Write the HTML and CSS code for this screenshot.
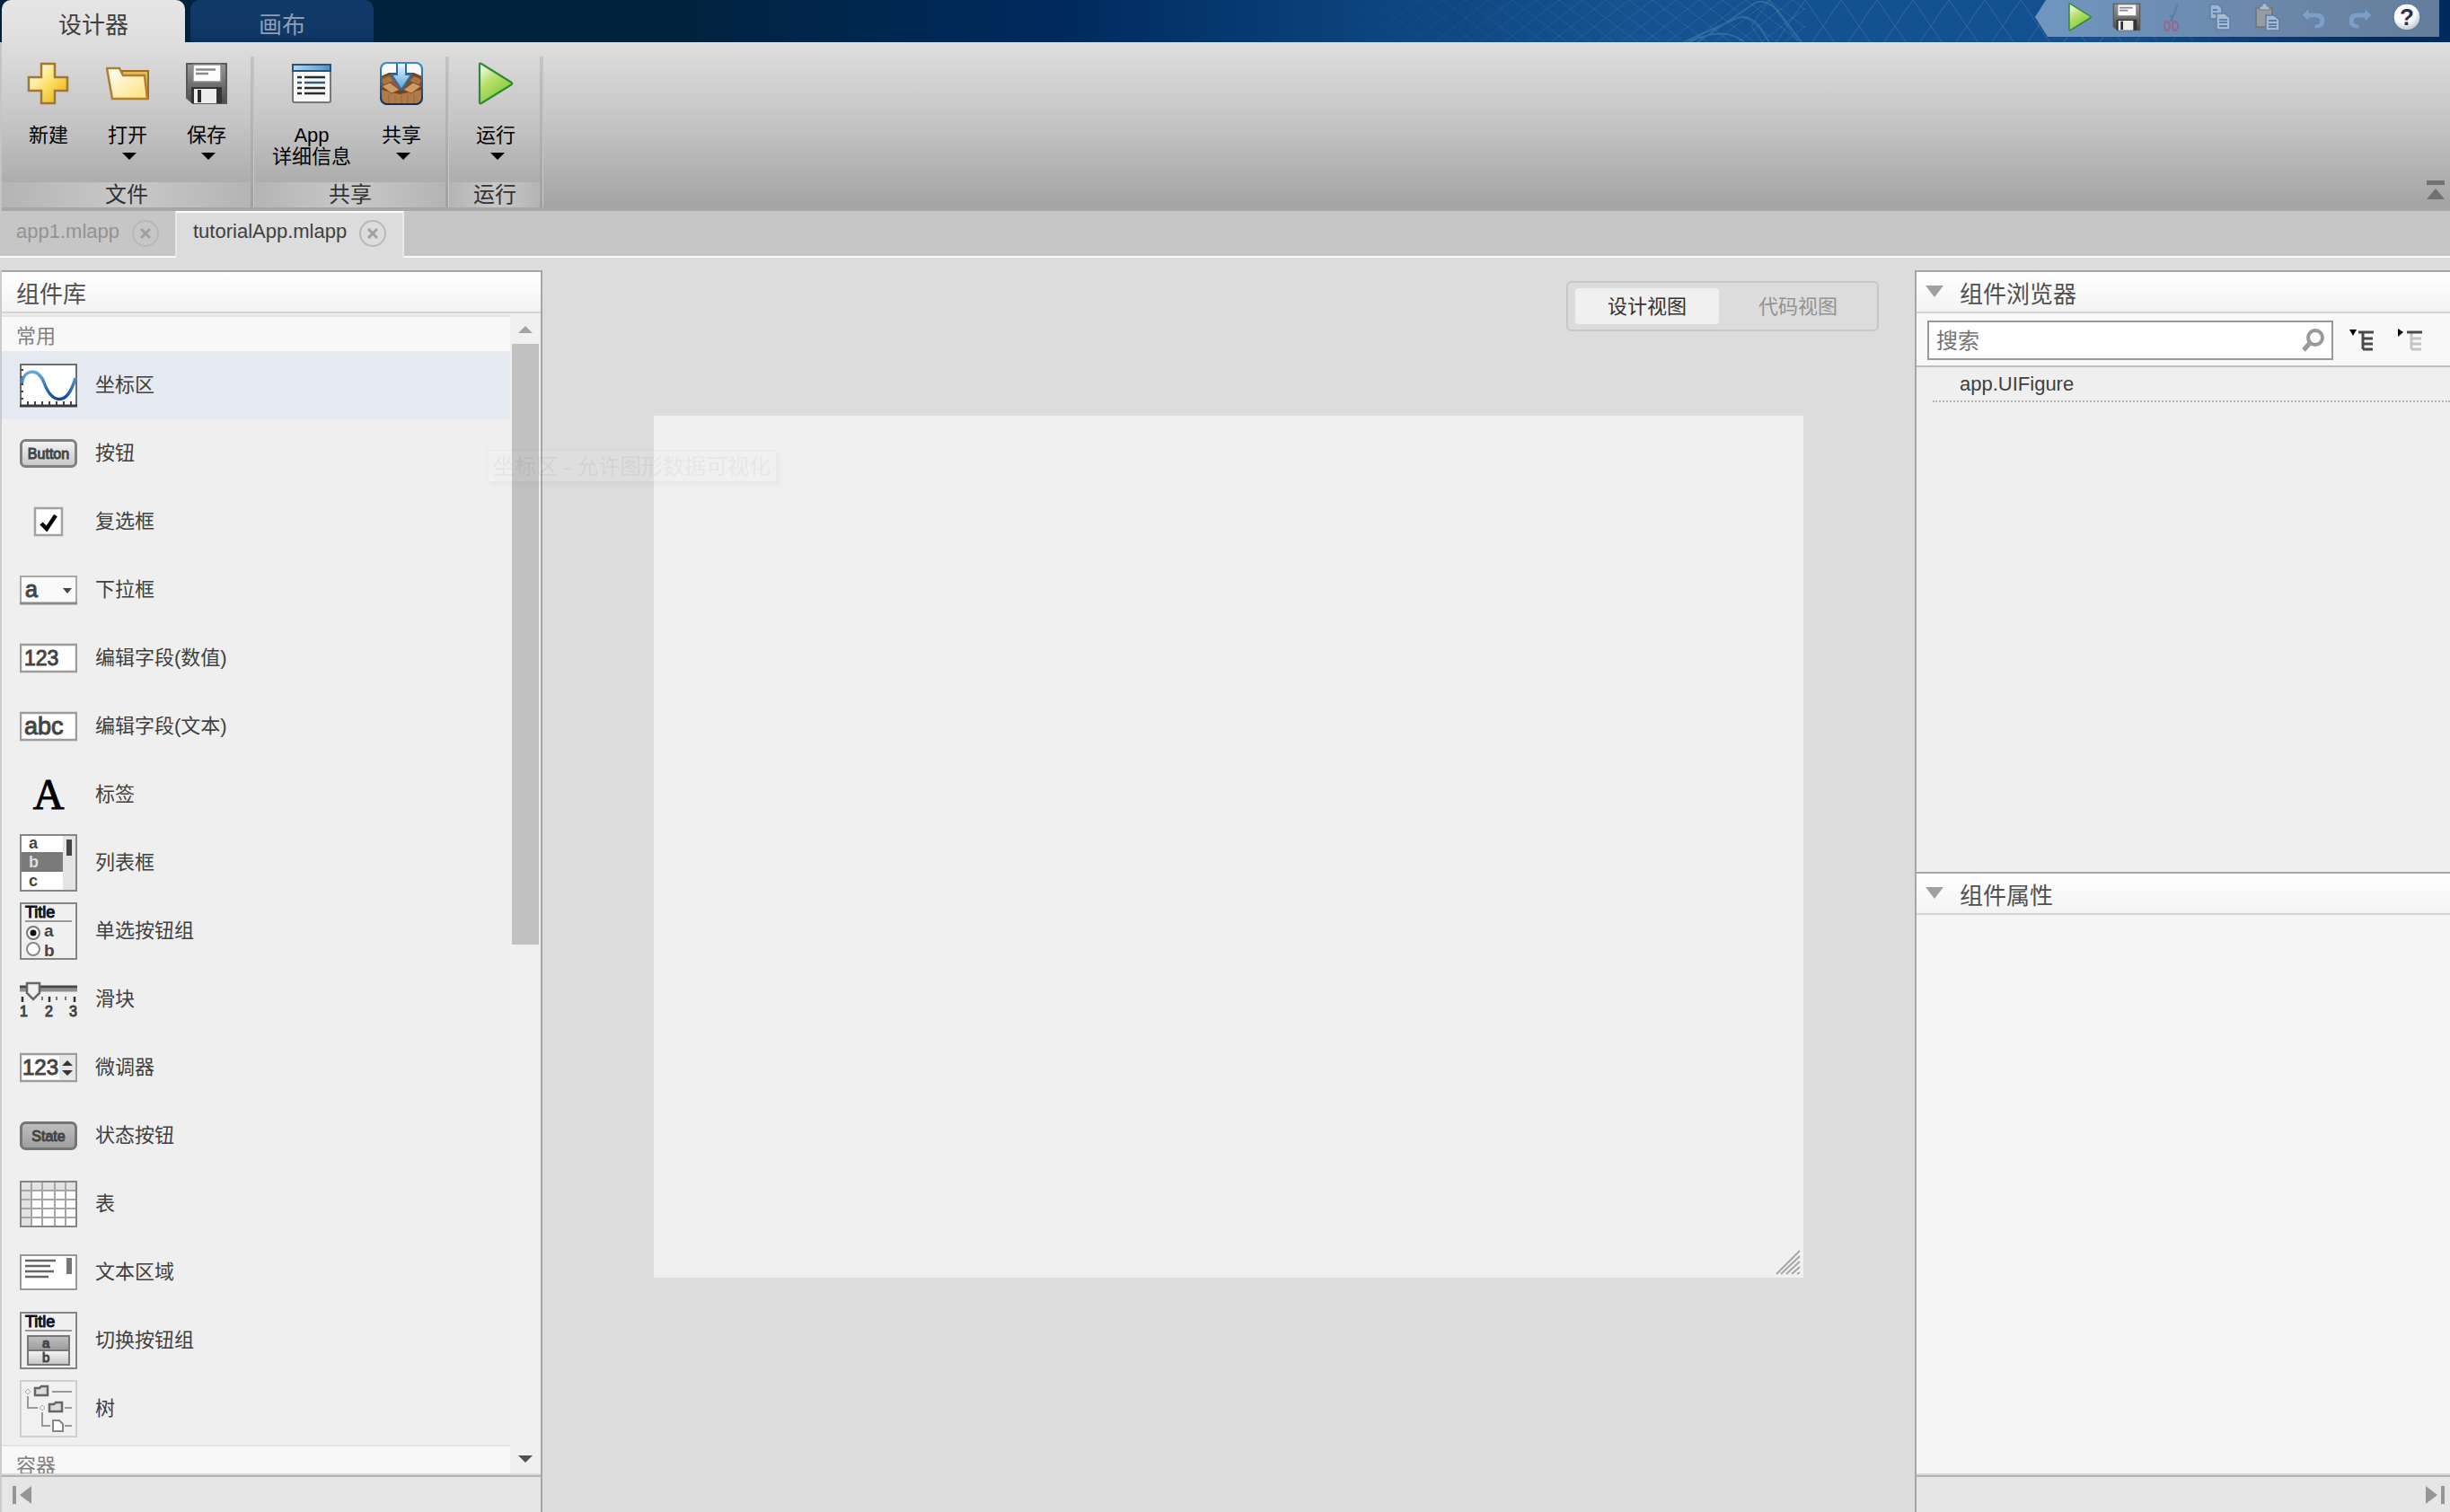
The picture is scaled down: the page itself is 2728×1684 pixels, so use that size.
FILE: index.html
```
<!DOCTYPE html>
<html lang="zh-CN">

<head>
    <meta charset="utf-8">
    <title>App 设计工具</title>
    <link rel="stylesheet" href="styles.css">
</head>

<body>

    <!-- shared gradients and icons -->
    <svg class="defs" width="0" height="0" aria-hidden="true">
        <defs>
            <linearGradient id="gold" x1="0" y1="0" x2="1" y2="1">
                <stop offset="0.1" stop-color="#fffdf0"/>
                <stop offset="0.5" stop-color="#fbe06a"/>
                <stop offset="1" stop-color="#e8a800"/>
            </linearGradient>
            <linearGradient id="paper" x1="0" y1="0" x2="1" y2="1">
                <stop offset="0" stop-color="#ffffff"/>
                <stop offset="1" stop-color="#fbe17a"/>
            </linearGradient>
            <linearGradient id="green" x1="0" y1="0" x2="0.6" y2="1">
                <stop offset="0" stop-color="#ffffff"/>
                <stop offset="0.45" stop-color="#b9e070"/>
                <stop offset="1" stop-color="#7cc62a"/>
            </linearGradient>
            <linearGradient id="metal" x1="0" y1="0" x2="0" y2="1">
                <stop offset="0" stop-color="#9a9a9a"/>
                <stop offset="1" stop-color="#4a4a4a"/>
            </linearGradient>
            <linearGradient id="btnFace" x1="0" y1="0" x2="0" y2="1">
                <stop offset="0" stop-color="#f6f6f6"/>
                <stop offset="1" stop-color="#c6c6c6"/>
            </linearGradient>
            <linearGradient id="darkFace" x1="0" y1="0" x2="0" y2="1">
                <stop offset="0" stop-color="#c0c0c0"/>
                <stop offset="1" stop-color="#9c9c9c"/>
            </linearGradient>
            <linearGradient id="blue" x1="0" y1="0" x2="0" y2="1">
                <stop offset="0" stop-color="#f4fbff"/>
                <stop offset="1" stop-color="#4f9fd6"/>
            </linearGradient>
            <linearGradient id="bar" x1="0" y1="0" x2="1" y2="0">
                <stop offset="0" stop-color="#b5daf2"/>
                <stop offset="1" stop-color="#4b94c9"/>
            </linearGradient>
            <linearGradient id="rim" x1="0" y1="0" x2="0" y2="1">
                <stop offset="0" stop-color="#3f8dc0"/>
                <stop offset="1" stop-color="#15325c"/>
            </linearGradient>
            <linearGradient id="wave" x1="0" y1="0" x2="0" y2="1">
                <stop offset="0" stop-color="#62abdc"/>
                <stop offset="1" stop-color="#12489a"/>
            </linearGradient>
            <radialGradient id="ball" cx="0.4" cy="0.3" r="0.8">
                <stop offset="0.5" stop-color="#ffffff"/>
                <stop offset="1" stop-color="#9fb3bd"/>
            </radialGradient>
            <linearGradient id="fade" x1="0" y1="0" x2="1" y2="0">
                <stop offset="0" stop-color="#fff" stop-opacity="0"/>
                <stop offset="0.4" stop-color="#fff"/>
                <stop offset="0.8" stop-color="#fff"/>
                <stop offset="1" stop-color="#fff" stop-opacity="0"/>
            </linearGradient>
            <mask id="fadeMask"><rect width="1100" height="47" fill="url(#fade)"/></mask>
            <pattern id="fine" width="26" height="20" patternUnits="userSpaceOnUse">
                <path d="M0 0L26 20M26 0L0 20" stroke="#4f80ad" stroke-opacity="0.4" fill="none"/>
            </pattern>
            <pattern id="wide" width="40" height="58" patternUnits="userSpaceOnUse">
                <path d="M0 0L40 58M40 0L0 58" stroke="#4f80ad" stroke-opacity="0.5" fill="none"/>
            </pattern>
        </defs>
        <symbol id="i-play" viewBox="0 0 48 48">
            <path d="M6 2.500Q6 .8 8 2L41 22.500Q43.500 24 41 25.500L8 46Q6 47 6 45z" fill="url(#green)" stroke="#2f8a34" stroke-width="2.200"/>
        </symbol>
        <symbol id="i-disk" viewBox="0 0 48 48">
            <path d="M2 2H46V46H9L2 40z" fill="url(#metal)" stroke="#5a5a5a" stroke-width="2"/>
            <path d="M9 3H40V22H9z" fill="#fdfdfd" stroke="#8c8c8c" stroke-width="1.500"/>
            <path d="M12 8.500H34M12 13H26" stroke="#8a8a8a" stroke-width="2.500"/>
            <path d="M7 46V28H41V46z" fill="#333"/>
            <path d="M10 46V30H35V46z" fill="#ededed"/>
            <path d="M14 31H18V45H14z" fill="#2a2a2a"/>
        </symbol>
    </svg>

    <header class="titlebar">
        <svg class="lattice" width="1100" height="47" aria-hidden="true">
            <g mask="url(#fadeMask)">
                <rect width="560" height="47" fill="url(#fine)"/>
                <rect x="500" width="600" height="47" fill="url(#wide)"/>
                <path d="M440 47L500 6Q512 -4 528 10L556 47M425 47L480 22Q494 14 508 28L520 47M430 47Q470 28 492 47" fill="none" stroke="#4f80ad" stroke-opacity="0.5" stroke-width="2"/>
            </g>
        </svg>
        <nav class="main-tabs">
            <button class="main-tab active">设计器</button>
            <button class="main-tab">画布</button>
        </nav>
        <div class="quick">
            <button aria-label="运行"><svg width="32" height="32"><use href="#i-play"/></svg></button>
            <button aria-label="保存"><svg width="32" height="32"><use href="#i-disk"/></svg></button>
            <button aria-label="剪切" class="dim">
                <svg width="32" height="32" viewBox="0 0 32 32"><path d="M13 14L15 21M21 2L13 21" stroke="#5d7590" stroke-width="2" fill="none"/><ellipse cx="9" cy="26" rx="3" ry="5" fill="none" stroke="#b0526b" stroke-width="2"/><ellipse cx="18" cy="26" rx="3" ry="5" fill="none" stroke="#b0526b" stroke-width="2"/></svg>
            </button>
            <button aria-label="复制" class="dim">
                <svg width="32" height="32" viewBox="0 0 32 32"><path d="M5 2H14L18 6V18H5z" fill="#b4c6dc" stroke="#577aa5" stroke-width="1.500"/><path d="M8 8H13M8 12H12" stroke="#577aa5" stroke-width="2"/><path d="M12 12H21L27 17V30H12z" fill="#c2d0e2" stroke="#577aa5" stroke-width="1.500"/><path d="M15 19H24M15 22H24M15 26H24" stroke="#577aa5" stroke-width="2"/></svg>
            </button>
            <button aria-label="粘贴" class="dim">
                <svg width="32" height="32" viewBox="0 0 32 32"><path d="M4 6H22V27H4z" fill="#aba598" stroke="#77746f" stroke-width="2"/><path d="M8 8V4H11V1H16V4H19V8z" fill="#c9d1d9" stroke="#69788c"/><path d="M15 14H24L30 19V31H15z" fill="#c2d0e2" stroke="#577aa5" stroke-width="1.500"/><path d="M18 20H27M18 24H27M18 27H27" stroke="#577aa5" stroke-width="2"/></svg>
            </button>
            <button aria-label="撤消" class="dim">
                <svg width="32" height="32" viewBox="0 0 32 32"><path d="M3 14L11 6V11H20Q29 11 29 20Q29 29 19 29H17V24H19Q23 24 23 20Q23 17 19 17H11V21z" fill="#86abd0" stroke="#5583b0"/></svg>
            </button>
            <button aria-label="重做" class="dim">
                <svg width="32" height="32" viewBox="0 0 32 32"><path d="M29 14L21 6V11H12Q3 11 3 20Q3 29 13 29H15V24H13Q9 24 9 20Q9 17 13 17H21V21z" fill="#86abd0" stroke="#5583b0"/></svg>
            </button>
            <button aria-label="帮助">
                <svg width="32" height="32" viewBox="0 0 32 32"><circle cx="16" cy="16" r="15" fill="url(#ball)" stroke="#4a7191"/><text x="16" y="25" class="qmark">?</text></svg>
            </button>
        </div>
    </header>

    <div class="ribbon">
        <section class="group">
            <div class="tools">
                <button class="tool">
                    <svg width="48" height="48" viewBox="0 0 48 48"><path d="M16 2H31V17H45V32H31V46H16V32H2V17H16z" fill="url(#gold)" stroke="#a4782a" stroke-width="2.500"/></svg>
                    <span>新建</span>
                </button>
                <button class="tool">
                    <svg width="48" height="48" viewBox="0 0 48 48"><path d="M18 16V10H47V41H42z" fill="#e5ba58" stroke="#9c6d22" stroke-width="2"/><path d="M1 7H15L19 15H43L46 41H7z" fill="url(#paper)" stroke="#b07f30" stroke-width="2.500"/></svg>
                    <span>打开</span>
                    <i class="arrow"></i>
                </button>
                <button class="tool">
                    <svg width="48" height="48"><use href="#i-disk"/></svg>
                    <span>保存</span>
                    <i class="arrow"></i>
                </button>
            </div>
            <h2 class="group-name">文件</h2>
        </section>
        <section class="group">
            <div class="tools">
                <button class="tool wide">
                    <svg width="48" height="48" viewBox="0 0 48 48">
                        <rect x="3" y="3" width="42" height="42" rx="2" fill="#f7f7f7" stroke="#777" stroke-width="2"/>
                        <rect x="3" y="3" width="42" height="7" fill="url(#bar)" stroke="#27547c" stroke-width="2"/>
                        <path d="M8 17H13M8 29H13M8 35H13M16 17H39M16 29H39M16 35H39" stroke="#2b2b2b" stroke-width="2.500"/>
                        <path d="M8 23H13M16 23H39" stroke="#2b5c94" stroke-width="2.500"/>
                    </svg>
                    <span>App<br>详细信息</span>
                </button>
                <button class="tool">
                    <svg width="48" height="48" viewBox="0 0 48 48">
                        <rect x="1" y="1" width="46" height="46" rx="7" fill="#fafafa"/>
                        <path d="M1 16L10 12H38L47 16V40Q47 47 40 47H8Q1 47 1 40z" fill="#6d4524"/>
                        <path d="M2 31L22 36L46 31V41Q46 46 40 46H8Q2 46 2 40z" fill="#b07a4a"/>
                        <path d="M2 17L12 14L24 28L15 34L2 28z" fill="#8d5c32"/><path d="M46 17L36 14L24 28L33 34L46 28z" fill="#7c4d28"/>
                        <path d="M2 27L11 23L22 31L13 35zM46 27L37 23L26 31L35 35z" fill="#cf9b66" stroke="#80502b"/>
                        <path d="M2 20L10 16L15 21L4 25zM46 20L38 16L33 21L44 25z" fill="#a97546"/>
                        <path d="M10 36V46M17 37V46M24 36V46M31 37V46M38 36V46" stroke="#94623a"/>
                        <path d="M19 1H29V14H35L24 31L13 14H19z" fill="url(#blue)" stroke="#2d6fa3" stroke-width="2"/>
                        <rect x="1" y="1" width="46" height="46" rx="7" fill="none" stroke="url(#rim)" stroke-width="2.200"/>
                    </svg>
                    <span>共享</span>
                    <i class="arrow"></i>
                </button>
            </div>
            <h2 class="group-name">共享</h2>
        </section>
        <section class="group">
            <div class="tools">
                <button class="tool">
                    <svg width="48" height="48"><use href="#i-play"/></svg>
                    <span>运行</span>
                    <i class="arrow"></i>
                </button>
            </div>
            <h2 class="group-name">运行</h2>
        </section>
        <button class="collapse" aria-label="折叠工具条">
            <svg width="20" height="22" viewBox="0 0 20 22"><path d="M0 0H20V5H0zM10 9L20 21H0z" fill="#6f7371"/></svg>
        </button>
    </div>

    <nav class="doc-tabs">
        <div class="doc-tab">
            <span>app1.mlapp</span>
            <button class="close" aria-label="关闭"><svg width="30" height="30" viewBox="0 0 30 30"><circle cx="15" cy="15" r="14"/><path d="M10 10L20 20M20 10L10 20"/></svg></button>
        </div>
        <div class="doc-tab active">
            <span>tutorialApp.mlapp</span>
            <button class="close" aria-label="关闭"><svg width="30" height="30" viewBox="0 0 30 30"><circle cx="15" cy="15" r="14"/><path d="M10 10L20 20M20 10L10 20"/></svg></button>
        </div>
    </nav>

    <main class="workspace">
        <aside class="panel library">
            <h1 class="panel-title">组件库</h1>
            <div class="library-body">
                <div class="items">
                    <h3 class="category">常用</h3>
                    <ul>
                        <li class="item selected">
                            <svg width="64" height="64" viewBox="0 0 64 64"><rect x="1" y="9" width="62" height="46" fill="#fff" stroke="#6d6d6d" stroke-width="2"/><path d="M0 55H64" stroke="#3a3a3a" stroke-width="3"/><path d="M9 54V50M17 54V50M25 54V50M33 54V50M41 54V50M49 54V50M57 54V50M1 15H4M1 23H4M1 31H4M1 39H4M1 47H4" stroke="#444" stroke-width="2"/><path d="M2 30C5 14 20 12 27 29C35 51 52 58 62 24" fill="none" stroke="url(#wave)" stroke-width="3.500"/></svg>
                            <span>坐标区</span>
                        </li>
                        <li class="item">
                            <svg width="64" height="64" viewBox="0 0 64 64"><rect x="1.500" y="17.500" width="61" height="29" rx="5" fill="url(#btnFace)" stroke="#808080" stroke-width="3"/><text x="32" y="38" class="t-digit" font-size="16" text-anchor="middle">Button</text></svg>
                            <span>按钮</span>
                        </li>
                        <li class="item">
                            <svg width="64" height="64" viewBox="0 0 64 64"><rect x="17" y="17" width="30" height="30" fill="#fff" stroke="#a2a2a2" stroke-width="2.500"/><path d="M24 34L30 40L40 25" fill="none" stroke="#000" stroke-width="4.500"/></svg>
                            <span>复选框</span>
                        </li>
                        <li class="item">
                            <svg width="64" height="64" viewBox="0 0 64 64"><rect x="1" y="17" width="62" height="30" fill="#fafafa" stroke="#a8a8a8" stroke-width="2"/><path d="M0 47H64" stroke="#8a8a8a" stroke-width="3"/><text x="6" y="40" class="t-digit" font-size="25">a</text><path d="M48 30H58L53 36z" fill="#444"/></svg>
                            <span>下拉框</span>
                        </li>
                        <li class="item">
                            <svg width="64" height="64" viewBox="0 0 64 64"><rect x="1" y="17" width="62" height="30" fill="#fff" stroke="#9c9c9c" stroke-width="2.500"/><text x="5" y="40" class="t-digit" font-size="23">123</text></svg>
                            <span>编辑字段(数值)</span>
                        </li>
                        <li class="item">
                            <svg width="64" height="64" viewBox="0 0 64 64"><rect x="1" y="17" width="62" height="30" fill="#fff" stroke="#9c9c9c" stroke-width="2.500"/><text x="5" y="41" class="t-digit" font-size="27">abc</text></svg>
                            <span>编辑字段(文本)</span>
                        </li>
                        <li class="item">
                            <svg width="64" height="64" viewBox="0 0 64 64"><text x="32" y="48" class="t-serif" font-size="48" text-anchor="middle">A</text></svg>
                            <span>标签</span>
                        </li>
                        <li class="item">
                            <svg width="64" height="64" viewBox="0 0 64 64"><rect x="1" y="1" width="62" height="62" fill="#fff" stroke="#858585" stroke-width="2"/><path d="M48 2H62V62H48z" fill="#e4e4e4"/><path d="M2 20H48V42H2z" fill="#7a7a7a"/><path d="M52 6H58V24H52z" fill="#444"/><text x="10" y="16" class="t-bold" font-size="18">a</text><text x="10" y="37" class="t-bold t-light" font-size="18">b</text><text x="10" y="58" class="t-bold" font-size="18">c</text></svg>
                            <span>列表框</span>
                        </li>
                        <li class="item">
                            <svg width="64" height="64" viewBox="0 0 64 64"><rect x="1" y="1" width="62" height="62" fill="#f0f0f0" stroke="#858585" stroke-width="2"/><text x="6" y="17" class="t-digit t-black" font-size="18">Title</text><path d="M6 21H58" stroke="#999" stroke-width="2"/><circle cx="15" cy="34" r="7" fill="#fff" stroke="#777" stroke-width="2"/><circle cx="15" cy="34" r="3.500" fill="#111"/><circle cx="15" cy="52" r="7" fill="#fff" stroke="#888" stroke-width="2"/><text x="27" y="38" class="t-bold" font-size="19">a</text><text x="27" y="60" class="t-bold" font-size="19">b</text></svg>
                            <span>单选按钮组</span>
                        </li>
                        <li class="item">
                            <svg width="64" height="64" viewBox="0 0 64 64"><path d="M0 20H64" stroke="#8c9094" stroke-width="7"/><path d="M0 18H64" stroke="#444" stroke-width="2.500"/><path d="M8 14H22V25L15 32L8 25z" fill="#efefef" stroke="#666" stroke-width="2.500"/><path d="M3 29V35M33 29V35M61 29V35" stroke="#333" stroke-width="2.500"/><path d="M25 29V33M41 29V33M51 29V33" stroke="#777" stroke-width="2"/><g class="t-digit" font-size="16"><text x="0" y="51">1</text><text x="28" y="51">2</text><text x="55" y="51">3</text></g></svg>
                            <span>滑块</span>
                        </li>
                        <li class="item">
                            <svg width="64" height="64" viewBox="0 0 64 64"><rect x="1" y="17" width="62" height="30" fill="#fff" stroke="#9c9c9c" stroke-width="2.500"/><path d="M44 18H62V46H44z" fill="#e6e6e6"/><text x="3" y="40" class="t-digit" font-size="24">123</text><path d="M47 30L53 24L59 30zM47 35H59L53 41z" fill="#333"/></svg>
                            <span>微调器</span>
                        </li>
                        <li class="item">
                            <svg width="64" height="64" viewBox="0 0 64 64"><rect x="1.500" y="17.500" width="61" height="29" rx="5" fill="url(#darkFace)" stroke="#757575" stroke-width="3"/><text x="32" y="38" class="t-digit" font-size="16" text-anchor="middle">State</text></svg>
                            <span>状态按钮</span>
                        </li>
                        <li class="item">
                            <svg width="64" height="64" viewBox="0 0 64 64"><rect x="1" y="7" width="62" height="50" fill="#fff"/><path d="M1 7H63V17H13V57H1z" fill="#e2e2e2"/><path d="M13 7V57M25 7V57M39 7V57M51 7V57M1 17H63M1 27H63M1 37H63M1 47H63" stroke="#a6a6a8" stroke-width="2"/><rect x="1" y="7" width="62" height="50" fill="none" stroke="#858585" stroke-width="2"/></svg>
                            <span>表</span>
                        </li>
                        <li class="item">
                            <svg width="64" height="64" viewBox="0 0 64 64"><rect x="1" y="13" width="62" height="38" fill="#fff" stroke="#999" stroke-width="2"/><path d="M6 19H40M6 25H34M6 31H38M6 37H32" stroke="#666" stroke-width="2.500"/><path d="M52 16H58V34H52z" fill="#777"/></svg>
                            <span>文本区域</span>
                        </li>
                        <li class="item">
                            <svg width="64" height="64" viewBox="0 0 64 64"><rect x="1" y="1" width="62" height="62" fill="#f0f0f0" stroke="#858585" stroke-width="2"/><text x="6" y="17" class="t-digit t-black" font-size="18">Title</text><path d="M6 21H58" stroke="#999" stroke-width="2"/><rect x="9" y="27" width="46" height="16" fill="url(#darkFace)" stroke="#777" stroke-width="2"/><rect x="9" y="43" width="46" height="16" fill="url(#btnFace)" stroke="#777" stroke-width="2"/><text x="25" y="40" class="t-digit" font-size="15">a</text><text x="25" y="56" class="t-digit" font-size="15">b</text></svg>
                            <span>切换按钮组</span>
                        </li>
                        <li class="item">
                            <svg width="64" height="64" viewBox="0 0 64 64"><rect x="1" y="1" width="62" height="62" fill="#f1f1f1" stroke="#cfcfcf" stroke-width="2"/><path d="M36 13H58M9 18V31H20M50 31H58M25 36V51H34M50 51H58" fill="none" stroke="#999" stroke-width="2"/><path d="M9 10L12 13L9 16L6 13zM25 28L28 31L25 34L22 31z" fill="none" stroke="#aaa"/><path d="M17 9L22 9L24 7H31V17H17zM33 27L38 27L40 25H47V35H33z" fill="#dcdcdc" stroke="#666" stroke-width="2.500"/><path d="M37 45H44L48 49V57H37z" fill="#fff" stroke="#888" stroke-width="2"/></svg>
                            <span>树</span>
                        </li>
                    </ul>
                    <h3 class="category">容器</h3>
                </div>
                <div class="scrollbar">
                    <button class="scroll-up" aria-label="向上滚动"></button>
                    <div class="track"><div class="thumb"></div></div>
                    <button class="scroll-down" aria-label="向下滚动"></button>
                </div>
            </div>
            <div class="panel-foot">
                <button aria-label="折叠组件库"><svg width="22" height="22" viewBox="0 0 22 22"><path d="M0 1H4V21H0zM8 11L21 1V21z" fill="#969696"/></svg></button>
            </div>
            <div class="tooltip">坐标区 - 允许图形数据可视化</div>
        </aside>

        <section class="design">
            <div class="view-switch">
                <button class="active">设计视图</button>
                <button>代码视图</button>
            </div>
            <div class="canvas">
                <svg class="grip" width="28" height="28" viewBox="0 0 28 28"><path d="M1 27L27 1M6 27L27 7M12 27L27 13M18 27L27 19M24 27L27 25" fill="none" stroke="#a6a6a6" stroke-width="2"/></svg>
            </div>
        </section>

        <aside class="panel inspector">
            <section class="pane">
                <h1 class="panel-title"><i class="fold"></i>组件浏览器</h1>
                <div class="search-row">
                    <div class="search">
                        <input type="text" id="search" placeholder="搜索" aria-label="搜索">
                        <svg width="26" height="26" viewBox="0 0 26 26"><circle cx="15" cy="10" r="8" fill="none" stroke="#999" stroke-width="4"/><path d="M9 16L2 24" stroke="#999" stroke-width="5"/></svg>
                    </div>
                    <button aria-label="全部展开"><svg width="28" height="26" viewBox="0 0 28 26"><path d="M0 1H8L4 8z" fill="#000"/><path d="M10 4H27M15 4V23M15 11H26M15 17H26M15 23H26" fill="none" stroke="#4a4a4a" stroke-width="3"/></svg></button>
                    <button aria-label="全部折叠"><svg width="28" height="26" viewBox="0 0 28 26"><path d="M0 0V9L6 4z" fill="#000"/><path d="M15 4V23M15 11H26M15 17H26M15 23H26" fill="none" stroke="#c4c4c4" stroke-width="3"/><path d="M10 4H27" stroke="#4a4a4a" stroke-width="3"/></svg></button>
                </div>
                <ul class="tree">
                    <li>app.UIFigure</li>
                </ul>
            </section>
            <section class="pane props">
                <h1 class="panel-title"><i class="fold"></i>组件属性</h1>
            </section>
            <div class="panel-foot right">
                <button aria-label="折叠面板"><svg width="22" height="22" viewBox="0 0 22 22"><path d="M18 1H22V21H18zM14 11L1 1V21z" fill="#969696"/></svg></button>
            </div>
        </aside>
    </main>

</body>
</html>
```
FILE: styles.css
```
* {
    box-sizing: border-box;
}

body {
    margin: 0;
    height: 100vh;
    display: flex;
    flex-direction: column;
    overflow: hidden;
    background-color: #dcdcdc;
    color: #404040;
    font-family: "Liberation Sans", "Noto Sans CJK SC", sans-serif;
    font-size: 22px;
    line-height: 24px;
}

h1,
h2,
h3,
ul {
    margin: 0;
    padding: 0;
    font-weight: normal;
    list-style: none;
}

button {
    padding: 0;
    border: none;
    background: none;
    color: inherit;
    font: inherit;
    cursor: pointer;
}

svg {
    display: block;
    flex: none;
}

.defs {
    position: absolute;
}

/* title bar */
.titlebar {
    position: relative;
    flex: none;
    display: flex;
    justify-content: space-between;
    align-items: flex-start;
    height: 47px;
    padding: 0 12px 0 2px;
    background: linear-gradient(to right, #00213b 0, #00233f 28%, #002b60 44%, #0c447d 56%, #145290 66%, #135091 86%, #002b60 98%);
}

.lattice {
    position: absolute;
    right: 178px;
    top: 0;
}

.main-tabs {
    display: flex;
    gap: 6px;
}

.main-tab {
    width: 204px;
    height: 47px;
    padding-top: 8px;
    border-radius: 10px 10px 0 0;
    background: linear-gradient(#123a68, #103766 80%, #0a2f5a);
    color: #8e9fb4;
    font-size: 26px;
    line-height: 32px;
}

.main-tab.active {
    background: linear-gradient(#e6e6e6, #dedede);
    color: #404040;
}

.quick {
    position: relative;
    display: flex;
    gap: 20px;
    height: 41px;
    padding: 3px 20px 6px 34px;
    background: linear-gradient(to right, #7096c0, #6984a4 75%, #637d9b);
    clip-path: polygon(12px 0, 100% 0, 100% 100%, 14px 100%, 0 19px);
}

.quick .dim {
    opacity: 0.7;
}

.qmark {
    font-weight: bold;
    font-size: 26px;
    text-anchor: middle;
    fill: #2b3148;
}

/* ribbon */
.ribbon {
    position: relative;
    flex: none;
    display: flex;
    height: 188px;
    padding-bottom: 4px;
    border-left: 2px solid #c4c4c4;
    background: linear-gradient(#dedede, #c6c6c6 45%, #a4a4a4 97%, #a8a8a8);
}

.group {
    position: relative;
    display: flex;
    flex-direction: column;
    padding-right: 3px;
}

.group:after {
    content: "";
    position: absolute;
    right: 0;
    top: 16px;
    bottom: 0;
    width: 3px;
    background: linear-gradient(#c2c2c2, #a0a0a0);
    border-right: 1px solid #c8c8c8;
}

.tools {
    flex: 1;
    display: flex;
    padding: 22px 6px 0 8px;
}

.tool {
    width: 88px;
    display: flex;
    flex-direction: column;
    align-items: center;
    color: #000;
}

.tool.wide {
    width: 112px;
}

.tool span {
    margin-top: 22px;
}

.arrow {
    margin: 7px 0 0 4px;
    border: 8px solid transparent;
    border-top-color: #000;
    border-bottom: none;
}

.group-name {
    background: linear-gradient(to right, #b4b4b4, #c8c8c8 50%, #b4b4b4);
    font-size: 24px;
    line-height: 28px;
    text-align: center;
    color: #333;
}

.collapse {
    margin: auto 6px 8px auto;
}

/* document tabs */
.doc-tabs {
    flex: none;
    display: flex;
    height: 52px;
    border-bottom: 2px solid #fafafa;
    background-color: #c6c6c6;
}

.doc-tab {
    display: flex;
    align-items: center;
    gap: 14px;
    height: 52px;
    padding: 0 18px 2px;
    color: #939393;
}

.doc-tab.active {
    border: 2px solid #e8e8e8;
    border-top-color: #fff;
    border-bottom: none;
    padding-bottom: 4px;
    background-color: #dcdcdc;
    color: #404040;
}

.doc-tab span {
    padding-bottom: 4px;
}

.close circle {
    fill: none;
    stroke: #b8b8b8;
    stroke-width: 2;
}

.close path {
    stroke: #a0a0a0;
    stroke-width: 3;
}

/* work area */
.workspace {
    flex: 1;
    min-height: 0;
    display: grid;
    grid-template-columns: 604px 1fr 596px;
    padding-top: 14px;
}

.panel {
    position: relative;
    display: flex;
    flex-direction: column;
    min-height: 0;
    background-color: #efefef;
}

.library {
    border-left: 2px solid #cbcbcb;
    border-right: 2px solid #a6a6a6;
}

.inspector {
    border-left: 2px solid #a6a6a6;
}

.panel-title {
    flex: none;
    display: flex;
    align-items: center;
    height: 48px;
    padding: 5px 0 0 16px;
    border-top: 2px solid #a6a6a6;
    border-bottom: 2px solid #d4d4d4;
    background: linear-gradient(#fff, #f3f3f3);
    color: #505050;
    font-size: 26px;
    line-height: 32px;
}

.panel-foot {
    flex: none;
    display: flex;
    align-items: center;
    height: 43px;
    padding: 2px 12px 0;
    border-top: 2px solid #d8d8d8;
    box-shadow: inset 0 2px #b4b4b4;
    background-color: #e6e6e6;
}

.panel-foot.right {
    justify-content: flex-end;
    padding: 2px 6px 0;
}

.library-body {
    flex: 1;
    min-height: 0;
    display: flex;
    padding-top: 2px;
}

.items {
    flex: 1;
    overflow: hidden;
}

.category {
    padding: 10px 16px 4px;
    border-top: 2px solid #e4e4e4;
    background-color: #f8f8f8;
    color: #808080;
    font-size: 22px;
}

.items ul {
    padding-bottom: 2px;
}

.item {
    display: flex;
    align-items: center;
    gap: 20px;
    height: 76px;
    padding-left: 20px;
}

.item.selected {
    background-color: #e4e9f2;
}

/* text inside the component icons */
.t-bold,
.t-digit {
    fill: #444;
    font-family: "Liberation Sans", sans-serif;
    font-weight: bold;
}

.t-digit {
    font-weight: normal;
    stroke: #444;
    stroke-width: 1px;
}

.t-light {
    fill: #ddd;
}

.t-black {
    fill: #111;
    stroke: #111;
}

.t-bold.t-light {
    stroke: none;
}

.t-serif {
    fill: #000;
    stroke: #000;
    font-family: "Liberation Serif", serif;
}

.scrollbar {
    display: flex;
    flex-direction: column;
    width: 34px;
    padding: 0 2px;
    background-color: #f0f0f0;
}

.scroll-up,
.scroll-down {
    height: 32px;
    display: flex;
    justify-content: center;
    align-items: center;
}

.scroll-up:before,
.scroll-down:before {
    content: "";
    border: 8px solid transparent;
}

.scroll-up:before {
    border-bottom-color: #a3a3a3;
    border-top: none;
}

.scroll-down:before {
    border-top-color: #505050;
    border-bottom: none;
}

.track {
    flex: 1;
    display: flex;
    flex-direction: column;
}

.track:after {
    content: "";
    flex: 5;
}

.thumb {
    flex: 6;
    background-color: #c1c1c1;
}

.tooltip {
    position: absolute;
    left: 540px;
    top: 200px;
    padding: 4px 6px 2px;
    border: 1px solid #767676;
    background-color: #fff;
    box-shadow: 4px 4px 3px #888;
    color: #575757;
    font-size: 24px;
    line-height: 28px;
    white-space: nowrap;
    opacity: 0.06;
    z-index: 1;
}

/* designer */
.design {
    padding-top: 12px;
}

.view-switch {
    display: flex;
    gap: 8px;
    width: 348px;
    margin: 0 40px 0 auto;
    padding: 6px 8px;
    border: 2px solid #c6c6c6;
    border-radius: 6px;
}

.view-switch button {
    flex: 1;
    height: 40px;
    padding-top: 2px;
    border-radius: 4px;
    color: #939393;
}

.view-switch .active {
    background-color: #f0f0f0;
    color: #333;
}

.canvas {
    position: relative;
    margin: 94px 124px;
    aspect-ratio: 4 / 3;
    background-color: #f0f0f0;
}

.grip {
    position: absolute;
    right: 3px;
    bottom: 3px;
}

/* component browser */
.pane {
    flex: 1;
}

.props {
    background-color: #f5f5f5;
}

.fold {
    margin: 0 18px 6px -6px;
    border: 10px solid transparent;
    border-top: 13px solid #a0a0a0;
    border-bottom: none;
}

.search-row {
    display: flex;
    align-items: center;
    gap: 26px;
    height: 60px;
    padding: 2px 12px 0;
    border-bottom: 2px solid #bcbcbc;
    background-color: #f8f8f8;
}

.search {
    position: relative;
    width: 452px;
    margin-right: -8px;
}

.search input {
    display: block;
    width: 100%;
    height: 44px;
    padding: 2px 44px 0 8px;
    border: 2px solid #999;
    border-radius: 0;
    background-color: #fff;
    font: inherit;
    font-size: 24px;
}

.search input::placeholder {
    color: #757575;
}

.search svg {
    position: absolute;
    right: 9px;
    top: 9px;
}

.tree {
    padding-left: 18px;
}

.tree li {
    padding: 7px 30px 6px;
    border-bottom: 2px dotted #b4b4b4;
}
```
